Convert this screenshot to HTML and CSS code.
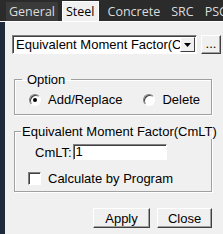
FILE: index.html
```html
<!DOCTYPE html>
<html lang="en">
<head>
    <meta charset="UTF-8">
    <title>Steel</title>
    <link rel="stylesheet" href="styles.css">
</head>
<body>
    <div class="tabs">
        <div class="tab">General</div>
        <div class="tab active">Steel</div>
        <div class="tab plain">Concrete</div>
        <div class="tab plain">SRC</div>
        <div class="tab plain">PSC</div>
    </div>
    <div class="main">
        <div class="strip"></div>
        <div class="panel">
            <!-- combo + browse -->
            <div class="combo-row">
                <div class="combo">
                    <span class="combo-text">Equivalent Moment Factor(CmLT)</span>
                    <span class="drop"><svg width="7" height="4" viewBox="0 0 7 4"><path d="M0 0h7L3.5 4z" fill="#000"/></svg></span>
                </div>
                <div class="btn dots">...</div>
            </div>

            <fieldset class="group option">
                <legend>Option</legend>
                <div class="radios">
                    <label class="radio"><span class="dot on"></span>Add/Replace</label>
                    <label class="radio"><span class="dot"></span>Delete</label>
                </div>
            </fieldset>

            <fieldset class="group factor">
                <legend>Equivalent Moment Factor(CmLT)</legend>
                <div class="field">
                    <span>CmLT:</span>
                    <div class="edit">1</div>
                </div>
                <label class="check"><span class="box"></span>Calculate by Program</label>
            </fieldset>

            <div class="actions">
                <div class="btn push apply">Apply</div>
                <div class="btn push">Close</div>
            </div>
        </div>
    </div>
</body>
</html>
```

FILE: styles.css
```css
body {
    margin: 0;
    width: 223px;
    height: 234px;
    overflow: hidden;
    background: #f0f0f0;
    font-family: "Liberation Sans", Arial, sans-serif;
    font-size: 13px;
    color: #000;
}
.tabs {
    display: flex;
    height: 22px;
    background: #2b2b2b;
    padding-left: 6px;
    box-sizing: border-box;
    border-bottom: 1px solid #fff;
    white-space: nowrap;
}
.tab {
    font-family: "Open Sans", sans-serif;
    font-size: 12.5px;
    color: #dcdcdc;
    padding: 0 3px;
    margin-right: 4px;
    line-height: 19px;
    margin-top: 2px;
    background: #3a3a3a;
}
.tab.active {
    background: #f0f0f0;
    color: #000;
    border: 1px solid #fff;
    border-bottom: none;
    margin-top: 1px;
    padding: 0 3px;
}
.tab.plain {
    background: none;
    margin-right: 1px;
    padding: 0 5px;
}
.main {
    display: flex;
    height: 212px;
}
.strip {
    width: 5px;
    background: #1e2b3a;
}
.panel {
    flex: 1;
    padding: 13px 0 0 7px;
}
.combo-row {
    display: flex;
    gap: 4px;
}
.combo {
    width: 185px;
    height: 19px;
    box-sizing: border-box;
    background: #fff;
    border: 1px solid;
    border-color: #808080 #fff #fff #808080;
    box-shadow: inset 1px 1px 0 #404040;
    display: flex;
    align-items: center;
    overflow: hidden;
}
.combo-text {
    flex: 1;
    white-space: nowrap;
    overflow: hidden;
    padding-left: 3px;
}
.drop {
    width: 15px;
    height: 15px;
    margin-right: 1px;
    box-sizing: border-box;
    background: #f0f0f0;
    border: 1px solid;
    border-color: #fff #404040 #404040 #fff;
    display: flex;
    align-items: center;
    justify-content: center;
}
.btn {
    box-sizing: border-box;
    background: #f0f0f0;
    border: 1px solid;
    border-color: #fff #404040 #404040 #fff;
    box-shadow: inset -1px -1px 0 #a0a0a0;
    display: flex;
    align-items: center;
    justify-content: center;
}
.dots {
    width: 20px;
    height: 19px;
    padding-bottom: 3px;
}
.group {
    margin: 0 0 0 2px;
    width: 198px;
    box-sizing: border-box;
    border: 1px solid #a0a0a0;
    box-shadow: 1px 1px 0 #fff, inset 1px 1px 0 #fff;
    padding: 0;
    min-width: 0;
}
.group legend {
    white-space: nowrap;
}
.option {
    margin-top: 18px;
    height: 43px;
}
.option legend {
    padding: 0 6px 0 5px;
    margin-left: 7px;
}
.radios {
    display: flex;
    margin: 5px 0 0 14px;
}
.radio {
    display: flex;
    align-items: center;
    gap: 7px;
}
.radio + .radio {
    margin-left: 21px;
}
.dot {
    width: 12px;
    height: 12px;
    border-radius: 50%;
    box-sizing: border-box;
    background: #fff;
    border: 1px solid;
    border-color: #808080 #fff #fff #808080;
    box-shadow: inset 1px 1px 0 #404040;
    position: relative;
}
.dot.on::after {
    content: "";
    position: absolute;
    left: 3px;
    top: 3px;
    width: 4px;
    height: 4px;
    border-radius: 50%;
    background: #000;
}
.factor {
    margin-top: 9px;
    height: 68px;
}
.factor legend {
    padding: 0 1px;
    margin-left: 6px;
}
.field {
    display: flex;
    align-items: center;
    gap: 1px;
    margin: 5px 0 0 20px;
}
.edit {
    width: 94px;
    height: 16px;
    box-sizing: border-box;
    background: #fff;
    border: 1px solid;
    border-color: #808080 #fff #fff #808080;
    box-shadow: inset 1px 1px 0 #404040;
    line-height: 14px;
    padding-left: 2px;
}
.check {
    display: flex;
    align-items: center;
    gap: 7px;
    margin: 11px 0 0 13px;
}
.box {
    width: 13px;
    height: 13px;
    box-sizing: border-box;
    background: #fff;
    border: 1px solid;
    border-color: #808080 #fff #fff #808080;
    box-shadow: inset 1px 1px 0 #404040;
}
.actions {
    display: flex;
    width: 200px;
    justify-content: flex-end;
    gap: 7px;
    margin-top: 16px;
}
.push {
    width: 55px;
    height: 20px;
}
.push.apply {
    width: 57px;
}
```
